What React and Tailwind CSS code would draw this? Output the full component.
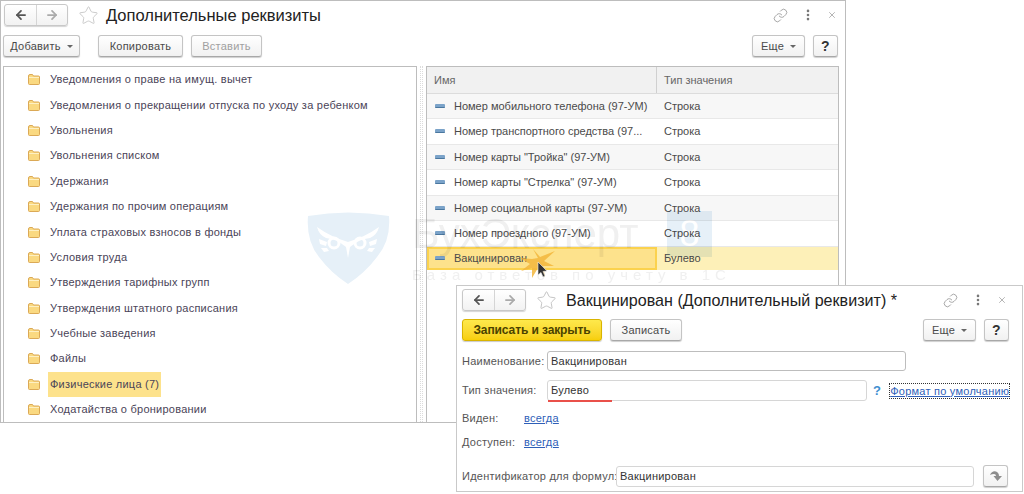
import { ArrowLeft, ArrowRight, Star, Link, EllipsisVertical, X } from 'lucide-react'

const FOLDERS = [
  'Уведомления о праве на имущ. вычет',
  'Уведомления о прекращении отпуска по уходу за ребенком',
  'Увольнения',
  'Увольнения списком',
  'Удержания',
  'Удержания по прочим операциям',
  'Уплата страховых взносов в фонды',
  'Условия труда',
  'Утверждения тарифных групп',
  'Утверждения штатного расписания',
  'Учебные заведения',
  'Файлы',
  'Физические лица (7)',
  'Ходатайства о бронировании',
]

const FIELDS = [
  'Номер мобильного телефона (97-УМ)',
  'Номер транспортного средства (97...',
  'Номер карты "Тройка" (97-УМ)',
  'Номер карты "Стрелка" (97-УМ)',
  'Номер социальной карты (97-УМ)',
  'Номер проездного (97-УМ)',
]

function FolderIcon() {
  return (
    <svg width="12" height="11" viewBox="0 0 12 11" className="shrink-0">
      <path d="M0.5 2 Q0.5 0.5 2 0.5 H4.5 L5.5 2 H10.5 Q11.5 2 11.5 3 V9.5 Q11.5 10.5 10.5 10.5 H1.5 Q0.5 10.5 0.5 9.5 Z" fill="#fad981" stroke="#dba956" />
      <path d="M1 3.5 H11" stroke="#fdf0c4" />
    </svg>
  )
}

function AttrIcon() {
  return <span className="w-[10px] h-[4px] shrink-0 rounded-[1px] bg-[#7ba3c9] border-b border-[#4a779f]" />
}

function Btn({ children, className = '' }) {
  return (
    <div className={`h-[22px] flex items-center justify-center rounded-[3px] border border-[#c4c4c4] border-b-[#a8a8a8] bg-gradient-to-b from-white to-[#f1f1f1] shadow-[0_1px_1px_#cfcfcf] text-[11px] tracking-[0.24px] text-[#4a4a4a] ${className}`}>
      {children}
    </div>
  )
}

function Nav() {
  return (
    <div className="w-[64px] h-[22px] flex rounded-[3px] border border-[#c8c8c8] bg-gradient-to-b from-white to-[#f2f2f2] shadow-[0_1px_1px_#d5d5d5]">
      <div className="w-[32px] flex items-center justify-center border-r border-[#d5d5d5]">
        <ArrowLeft size={14} strokeWidth={3} color="#555" />
      </div>
      <div className="flex-1 flex items-center justify-center">
        <ArrowRight size={14} strokeWidth={3} color="#aaa" />
      </div>
    </div>
  )
}

function TitleIcons() {
  return (
    <div className="ml-auto mr-[2px] w-[64px] flex items-center justify-between">
      <Link size={15} strokeWidth={1.2} color="#8a8a8a" />
      <EllipsisVertical size={14} strokeWidth={2.5} color="#777" />
      <X size={10} strokeWidth={1.5} color="#888" />
    </div>
  )
}

function Caret() {
  return <span className="ml-[6px] w-0 h-0 border-x-[3px] border-x-transparent border-t-[3px] border-t-[#666]" />
}

function Input({ children, className = '' }) {
  return (
    <div className={`flex items-center pl-[3px] rounded-[3px] border border-[#d6d6d6] bg-white text-[11px] text-[#333] ${className}`}>
      {children}
    </div>
  )
}

function FolderList() {
  return (
    <div className="w-[414px] h-[356px] shrink-0 border border-b-0 border-[#bdbdbd] overflow-hidden">
      {FOLDERS.map((name) => {
        const active = name.startsWith('Физические')
        return (
          <div key={name} className="h-[25.4px] flex items-center pl-[24px]">
            <FolderIcon />
            <span className={`ml-[8px] h-[25px] px-[2px] leading-[25px] text-[11px] tracking-[0.24px] text-[#4a4458] whitespace-nowrap ${active ? 'bg-[#fde28c]' : ''}`}>
              {name}
            </span>
          </div>
        )
      })}
    </div>
  )
}

function FieldTable() {
  return (
    <div className="w-[413px] h-[356px] shrink-0 border border-b-0 border-[#bdbdbd] text-[11px] text-[#4a4a4a] overflow-hidden">
      <div className="h-[26.5px] flex items-center bg-[#f1f1f1] border-b border-[#dcdcdc] text-[#666]">
        <div className="w-[230px] h-full flex items-center pl-[7px] border-r border-[#d0d0d0]">Имя</div>
        <div className="pl-[7px]">Тип значения</div>
      </div>
      {FIELDS.map((name, i) => (
        <div key={name} className={`h-[25.5px] flex items-center border-b border-[#e8e8e8] ${i % 2 === 0 ? 'bg-[#f7f7f7]' : 'bg-white'}`}>
          <div className="w-[230px] flex items-center pl-[8px]">
            <AttrIcon />
            <span className="ml-[9px] whitespace-nowrap">{name}</span>
          </div>
          <div className="pl-[7px]">Строка</div>
        </div>
      ))}
      <div className="h-[23px] flex items-center bg-[#fdf0b8]">
        <div className="w-[230px] h-full flex items-center pl-[6px] bg-[#fde28c] border-2 border-[#fbd24e]">
          <AttrIcon />
          <span className="ml-[9px]">Вакцинирован</span>
        </div>
        <div className="pl-[7px]">Булево</div>
      </div>
    </div>
  )
}

function Watermark() {
  return (
    <div className="absolute left-[307px] top-[211px] w-[410px] h-[74px] pointer-events-none mix-blend-multiply">
      <svg width="84" height="74" viewBox="0 0 84 74" className="absolute left-0 top-0">
        <path d="M1 5 Q41 -2 82 5 Q84 30 70 46 Q58 62 41 73 Q24 62 12 46 Q-1 30 1 5 Z" fill="#e6f0f8" />
        <path d="M10 16 Q24 26 41 31 Q58 26 72 16 Q70 24 63 27 Q52 28 43 36 L41 47 L39 36 Q30 28 19 27 Q12 24 10 16 Z" fill="#ffffff" />
        <circle cx="27" cy="32" r="5" fill="none" stroke="#ffffff" strokeWidth="3" />
        <circle cx="53" cy="32" r="5" fill="none" stroke="#ffffff" strokeWidth="3" />
        <path d="M12 28 L20 31 L19 35 L13 33 Z M14 37 L20 37 L22 40 L17 41 Z M70 28 L62 31 L63 35 L69 33 Z M68 37 L62 37 L60 40 L65 41 Z" fill="#ffffff" />
      </svg>
      <span className="absolute left-[105px] top-[-2px] text-[42px] leading-[50px] text-[#f0f0f0] whitespace-nowrap">БухЭксперт</span>
      <span className="absolute left-[360px] top-0 w-[45px] h-[46px] flex items-center justify-center bg-[#e6f0f8] text-[36px] text-white">8</span>
      <span className="absolute left-[105px] top-[55px] text-[15px] leading-[18px] tracking-[5px] text-[#f0f0f0] whitespace-nowrap">База ответов по учету в 1С</span>
    </div>
  )
}

function Cursor() {
  return (
    <svg width="36" height="30" viewBox="0 0 36 30" className="absolute left-[520px] top-[249px] pointer-events-none">
      <path d="M18 9 L13 0 L20 8 L35 2 L24 12 L34 17 L23 17 L25 28 L18 19 L12 29 L12 19 L1 22 L10 15 L0 9 L12 10 Z" fill="#f2b63c" opacity="0.85" />
      <path d="M18 13 V26 L21 23.5 L23 28 L25 27 L23 22.5 L27 22 Z" fill="#333" stroke="#eee" strokeWidth="0.6" />
    </svg>
  )
}

function Detail() {
  return (
    <div className="absolute left-[456px] top-[285px] w-[567px] h-[207px] bg-white border border-[#c9c9c9] pl-[5px] pr-[13px] pt-[3px] text-[11px] tracking-[0.24px] text-[#555]">
      <div className="h-[22px] flex items-center">
        <Nav />
        <Star size={21} strokeWidth={1} color="#bdbdbd" className="ml-[10px]" />
        <span className="ml-[9px] text-[16.1px] tracking-normal text-[#222] whitespace-nowrap">Вакцинирован (Дополнительный реквизит) *</span>
        <TitleIcons />
      </div>
      <div className="mt-[8px] flex">
        <div className="w-[140px] h-[22px] flex items-center justify-center rounded-[3px] border border-[#d9b400] bg-gradient-to-b from-[#fee94b] to-[#f7cf07] shadow-[0_1px_1px_#c9c9c9] text-[12px] tracking-[-0.1px] font-bold text-[#4a4200]">
          Записать и закрыть
        </div>
        <Btn className="ml-[8px] w-[72px]">Записать</Btn>
        <Btn className="ml-auto w-[53px]">Еще<Caret /></Btn>
        <Btn className="ml-[8px] w-[25px] !text-[14px] font-bold !text-[#333]">?</Btn>
      </div>
      <div className="mt-[10px] flex items-center h-[20px]">
        <span className="w-[85px] shrink-0 whitespace-nowrap">Наименование:</span>
        <Input className="w-[359px] h-full !border-[#bdbdbd]">Вакцинирован</Input>
      </div>
      <div className="mt-[9px] flex items-center h-[21px]">
        <span className="w-[85px] shrink-0 whitespace-nowrap">Тип значения:</span>
        <div className="relative shrink-0">
          <Input className="w-[320px] h-[21px]">Булево</Input>
          <span className="absolute left-[1px] top-[20px] w-[64px] h-[2px] bg-[#e9504a]" />
        </div>
        <span className="ml-[6px] text-[13px] font-bold text-[#3f8fd0]">?</span>
        <a className="ml-[8px] shrink-0 leading-[14px] border border-dotted border-[#333] text-[#2f5fb8] underline whitespace-nowrap">Формат по умолчанию</a>
      </div>
      <div className="mt-[9px] flex items-center h-[16px]">
        <span className="w-[62px]">Виден:</span>
        <a className="text-[#2f5fb8] underline">всегда</a>
      </div>
      <div className="mt-[8px] flex items-center h-[16px]">
        <span className="w-[62px]">Доступен:</span>
        <a className="text-[#2f5fb8] underline">всегда</a>
      </div>
      <div className="mt-[15px] flex items-center h-[22px]">
        <span className="w-[154px] shrink-0 whitespace-nowrap">Идентификатор для формул:</span>
        <Input className="w-[358px] h-[21px]">Вакцинирован</Input>
        <Btn className="ml-[9px] w-[25px]">
          <svg width="14" height="12" viewBox="0 0 14 12">
            <path d="M1 5 Q3 0.5 7 1.5 Q10 2.5 10 6 H13 L8.5 11 L4.5 6 H7 Q7 4 5 4 Q3 4 1 5 Z" fill="#8d8d8d" />
          </svg>
        </Btn>
      </div>
    </div>
  )
}

export default function App() {
  return (
    <div className="relative w-[1024px] h-[494px] overflow-hidden bg-white font-['Liberation_Sans',sans-serif]">
      <div className="w-[846px] h-[423px] border border-[#bdbdbd] pl-[2px] pr-[6px] pt-[3px] bg-white">
        <div className="h-[22px] pl-[1px] flex items-center">
          <Nav />
          <Star size={21} strokeWidth={1} color="#c4c4c4" className="ml-[10px]" />
          <span className="ml-[7px] text-[16.5px] text-[#222] whitespace-nowrap">Дополнительные реквизиты</span>
          <TitleIcons />
        </div>
        <div className="mt-[9px] mr-[1px] flex">
          <Btn className="w-[77px]">Добавить<Caret /></Btn>
          <Btn className="ml-[18px] w-[85px]">Копировать</Btn>
          <Btn className="ml-[8px] w-[71px] !text-[#a0a0a0]">Вставить</Btn>
          <Btn className="ml-auto w-[53px]">Еще<Caret /></Btn>
          <Btn className="ml-[8px] w-[25px] !text-[14px] font-bold !text-[#333]">?</Btn>
        </div>
        <div className="mt-[9px] flex">
          <FolderList />
          <div className="w-[9px] shrink-0 flex justify-center">
            <span className="w-[3px] h-full border-x border-dotted border-[#dcdcdc]" />
          </div>
          <FieldTable />
        </div>
      </div>
      <Watermark />
      <Cursor />
      <Detail />
    </div>
  )
}
